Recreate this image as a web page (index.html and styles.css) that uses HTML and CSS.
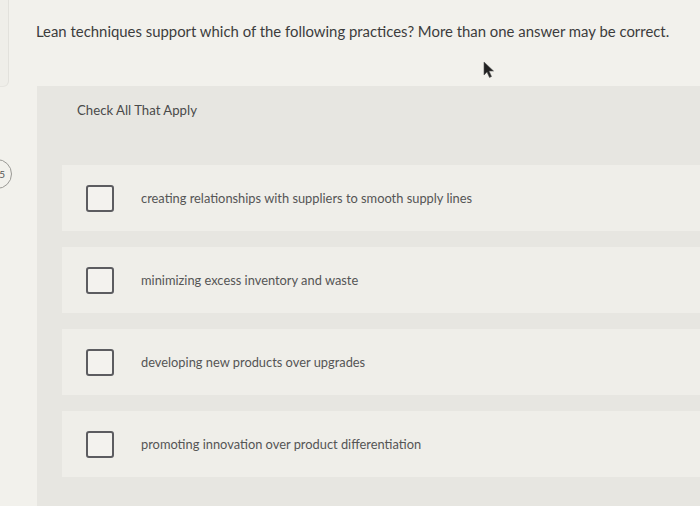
FILE: index.html
```html
<!DOCTYPE html>
<html>
<head>
<meta charset="utf-8">
<link rel="stylesheet" href="styles.css">
</head>
<body>
<div class="page">
  <aside class="side">
    <div class="side-card"></div>
    <div class="badge">5</div>
  </aside>
  <main class="main">
    <p class="question">Lean techniques support which of the following practices? More than one answer may be correct.</p>
    <section class="panel">
      <div class="instr">Check All That Apply</div>
      <ul class="options">
        <li class="option"><span class="box"></span><span class="label">creating relationships with suppliers to smooth supply lines</span></li>
        <li class="option"><span class="box"></span><span class="label">minimizing excess inventory and waste</span></li>
        <li class="option"><span class="box"></span><span class="label">developing new products over upgrades</span></li>
        <li class="option"><span class="box"></span><span class="label">promoting innovation over product differentiation</span></li>
      </ul>
    </section>
  </main>
  <svg class="cursor" width="12" height="18" viewBox="0 0 12 18"><path d="M1 1 L1 14 L4 11 L6.5 16.5 L8.5 15.5 L6 10 L10.5 10 Z" fill="#222" stroke="#555" stroke-width="0.6"/></svg>
</div>
</body>
</html>
```
FILE: styles.css
```css
html, body {
  margin: 0;
  padding: 0;
  background: #f2f1ec;
  overflow: hidden;
}
.page {
  position: relative;
  width: 700px;
  height: 506px;
  display: grid;
  grid-template-columns: 37px 1fr;
  font-family: Lato, "Open Sans", sans-serif;
}
.side {
  display: flex;
  flex-direction: column;
}
.side-card {
  width: 8px;
  height: 86px;
  border-right: 1px solid #e2e1dc;
  border-bottom: 1px solid #e6e5e0;
  border-bottom-right-radius: 6px;
  background: #efeee9;
}
.badge {
  margin-top: 72px;
  margin-left: -18px;
  width: 30px;
  height: 30px;
  border: 1px solid #9a9995;
  border-radius: 50%;
  display: flex;
  align-items: center;
  justify-content: flex-end;
  padding-right: 6px;
  box-sizing: border-box;
  font-size: 10px;
  color: #555;
}
.main {
  display: flex;
  flex-direction: column;
}
.question {
  margin: 0 0 0 -1px;
  height: 86px;
  padding-top: 22px;
  box-sizing: border-box;
  font-size: 14.9px;
  color: #3c3c3c;
}
.panel {
  flex: 1;
  background: #e7e6e1;
  padding: 16px 0 0 25px;
}
.instr {
  padding-left: 15px;
  font-size: 13.2px;
  color: #4a4a4a;
  height: 63px;
}
.options {
  list-style: none;
  margin: 0;
  padding: 0;
  display: flex;
  flex-direction: column;
  gap: 16px;
}
.option {
  height: 66px;
  background: #efeee9;
  display: flex;
  align-items: center;
  padding-left: 24px;
}
.box {
  width: 24px;
  height: 23px;
  border: 2px solid #5c5c60;
  border-radius: 3px;
  background: #f3f2ee;
  flex: none;
}
.label {
  margin-left: 27px;
  font-size: 12.85px;
  color: #555;
}
.cursor {
  position: absolute;
  left: 483px;
  top: 61px;
}
```
